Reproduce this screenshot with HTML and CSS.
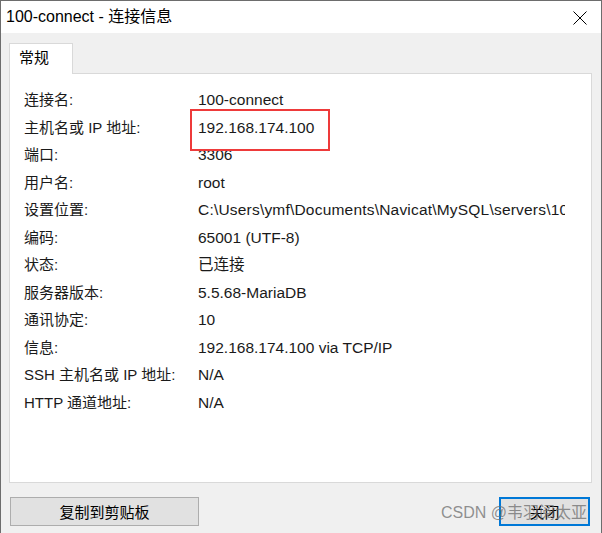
FILE: index.html
```html
<!DOCTYPE html>
<html lang="zh-CN">
<head>
<meta charset="utf-8">
<title>100-connect - 连接信息</title>
<link rel="stylesheet" href="styles.css">
</head>
<body>
<div class="window">
  <div class="titlebar">
    <span class="title">100-connect - 连接信息</span>
    <svg class="close-x" width="14" height="14" viewBox="0 0 14 14"><path d="M0.5 0.5 L13.5 13.5 M13.5 0.5 L0.5 13.5" stroke="#000" stroke-width="1" fill="none"/></svg>
  </div>
  <div class="content">
    <div class="tabs">
      <div class="tab">常规</div>
    </div>
    <div class="panel">
      <div class="grid">
        <div class="lbl">连接名:</div><div class="val">100-connect</div>
        <div class="lbl">主机名或 IP 地址:</div><div class="val"><span class="mark">192.168.174.100</span></div>
        <div class="lbl">端口:</div><div class="val">3306</div>
        <div class="lbl">用户名:</div><div class="val">root</div>
        <div class="lbl">设置位置:</div><div class="val clip">C:\Users\ymf\Documents\Navicat\MySQL\servers\100-connect</div>
        <div class="lbl">编码:</div><div class="val">65001 (UTF-8)</div>
        <div class="lbl">状态:</div><div class="val">已连接</div>
        <div class="lbl">服务器版本:</div><div class="val">5.5.68-MariaDB</div>
        <div class="lbl">通讯协定:</div><div class="val">10</div>
        <div class="lbl">信息:</div><div class="val">192.168.174.100 via TCP/IP</div>
        <div class="lbl">SSH 主机名或 IP 地址:</div><div class="val">N/A</div>
        <div class="lbl">HTTP 通道地址:</div><div class="val">N/A</div>
      </div>
    </div>
    <div class="buttons">
      <button class="btn copy">复制到剪贴板</button>
      <button class="btn close">关闭</button>
    </div>
  </div>
  <div class="watermark">CSDN @韦羽阅太亚</div>
</div>
</body>
</html>
```

FILE: styles.css
```css
* { box-sizing: border-box; }
html, body { margin: 0; padding: 0; }
body {
  width: 602px;
  height: 533px;
  overflow: hidden;
  background: #f0f0f0;
  font-family: "Liberation Sans", "Noto Sans CJK SC", sans-serif;
  color: #000;
}
.window {
  position: relative;
  width: 602px;
  height: 533px;
  border: 1px solid #6d6d6d;
  border-bottom: none;
  background: #f0f0f0;
  display: flex;
  flex-direction: column;
}
.titlebar {
  height: 32px;
  background: #fff;
  display: flex;
  align-items: center;
  justify-content: space-between;
  padding: 0 14px 0 5px;
  flex-shrink: 0;
}
.title {
  font-size: 16px;
  line-height: 20px;
  margin-top: -1px;
}
.close-x { display: block; margin-top: 1px; }
.content {
  flex: 1;
  display: flex;
  flex-direction: column;
  padding: 10px 9px 0 8px;
}
.tabs { display: flex; height: 30px; }
.tab {
  width: 64px;
  height: 31px;
  background: #fff;
  border: 1px solid #d9d9d9;
  border-bottom: none;
  font-size: 15px;
  line-height: 28px;
  padding-left: 9px;
  position: relative;
  z-index: 1;
}
.panel {
  height: 410px;
  background: #fff;
  border: 1px solid #d9d9d9;
  padding: 12px 0 0 14px;
  overflow: hidden;
}
.grid {
  display: grid;
  grid-template-columns: 174px 367px;
  grid-auto-rows: 27.5px;
  font-size: 15px;
  line-height: 27.5px;
}
.lbl, .val { white-space: nowrap; color: #1a1a1a; }
.val { overflow: hidden; font-size: 15.5px; }
.val.clip { letter-spacing: 0.2px; }
.mark { position: relative; }
.mark::after {
  content: "";
  position: absolute;
  left: -8px;
  top: -10px;
  width: 136px;
  height: 38px;
  border: 2px solid #ee3a3a;
}
.val:has(.mark) { overflow: visible; }
.buttons {
  display: flex;
  justify-content: space-between;
  margin-top: 14px;
  padding: 0 2px 0 1px;
}
.btn {
  height: 29px;
  background: #e1e1e1;
  border: 1px solid #adadad;
  font-family: "Liberation Sans", "Noto Sans CJK SC", sans-serif;
  font-size: 15px;
  color: #000;
  padding: 0;
}
.btn.copy { width: 189px; }
.btn.close { width: 91px; border: 2px solid #0078d7; }
.watermark {
  position: absolute;
  right: 14px;
  bottom: 10px;
  font-size: 16px;
  color: rgba(110, 110, 110, 0.75);
  white-space: nowrap;
  pointer-events: none;
}
```
